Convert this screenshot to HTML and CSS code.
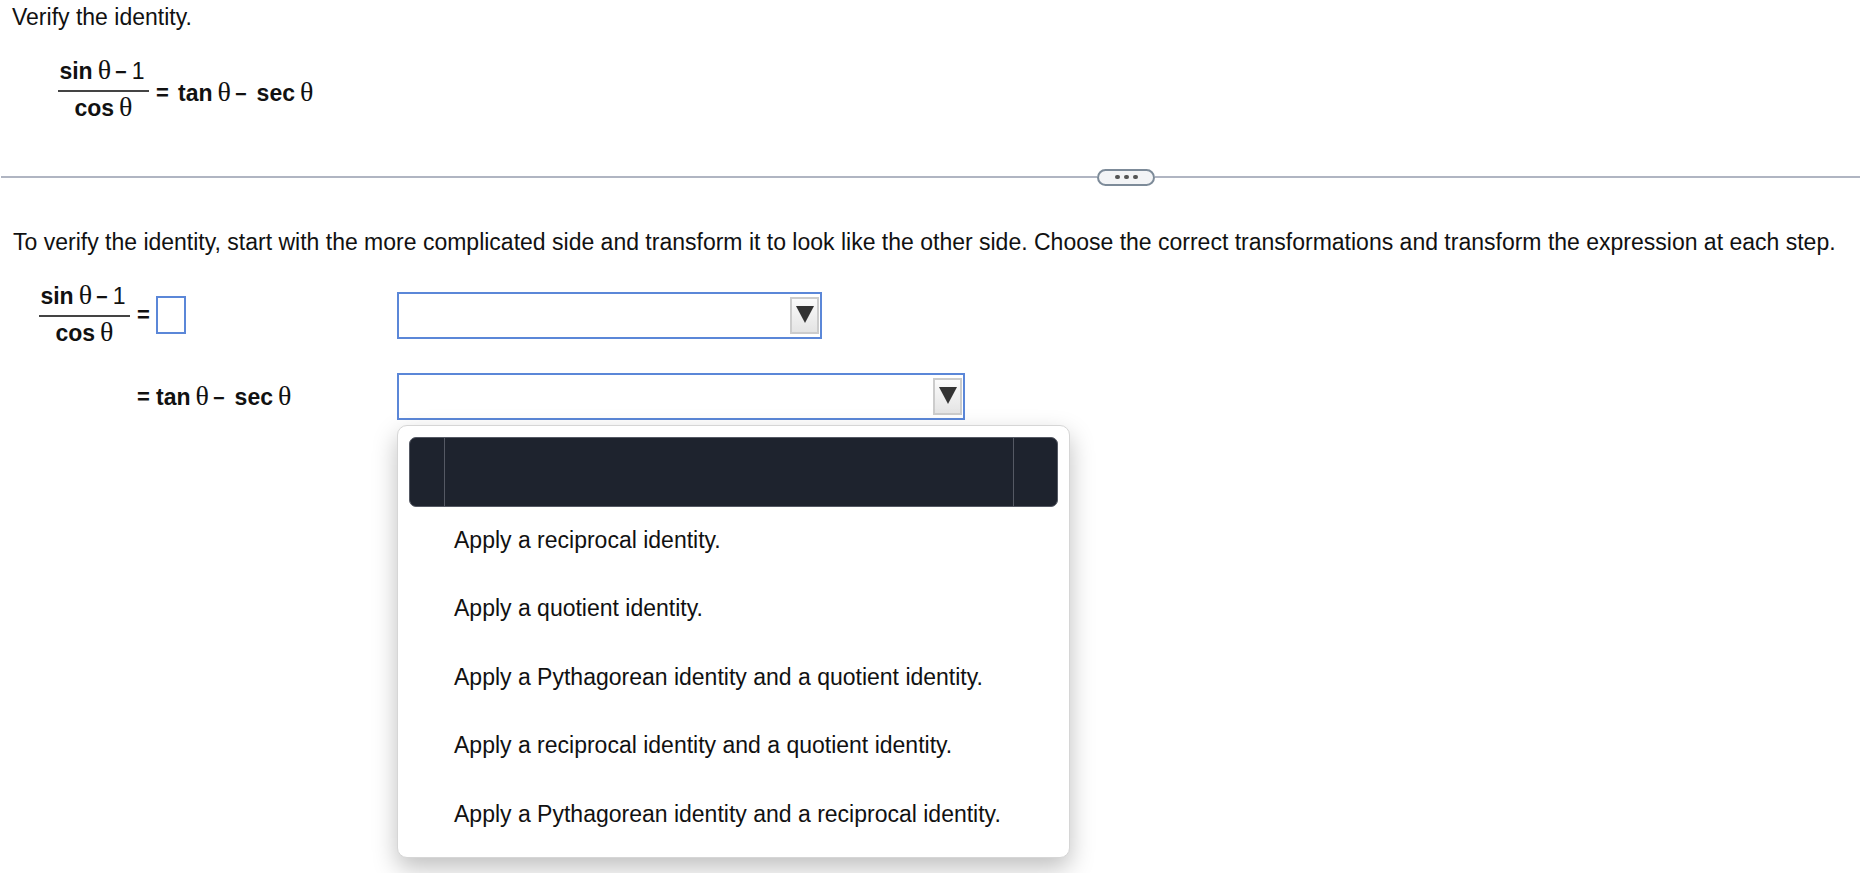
FILE: index.html
```
<!DOCTYPE html>
<html lang="en">
<head>
    <meta charset="UTF-8">
    <meta name="viewport" content="width=device-width, initial-scale=1.0">
    <title>Verify the identity</title>
    <link rel="stylesheet" href="styles.css">
</head>
<body>
    <section class="question">
        <p>Verify the identity.</p>
        <div class="equation">
            <div class="fraction">
                <div class="numerator"><b>sin</b><span class="theta">θ</span><b class="minus">−</b>1</div>
                <div class="denominator"><b>cos</b><span class="theta">θ</span></div>
            </div>
            <b class="equals">=</b>
            <div class="expression"><b>tan</b><span class="theta">θ</span><b class="minus wide">−</b><b>sec</b><span class="theta">θ</span></div>
        </div>
    </section>

    <div class="divider">
        <button class="handle" type="button" aria-label="Resize question area">
            <span class="dot"></span><span class="dot"></span><span class="dot"></span>
        </button>
    </div>

    <section class="answer">
        <p>To verify the identity, start with the more complicated side and transform it to look like the other side. Choose the correct transformations and transform the expression at each step.</p>
        <div class="steps">
            <div class="fraction">
                <div class="numerator"><b>sin</b><span class="theta">θ</span><b class="minus">−</b>1</div>
                <div class="denominator"><b>cos</b><span class="theta">θ</span></div>
            </div>
            <b class="equals">=</b>
            <div class="expression"><input class="blank" type="text" aria-label="Transformed expression"></div>
            <div class="dropdown">
                <select class="first" aria-label="First transformation">
                    <option></option>
                </select>
                <span class="arrow"></span>
            </div>

            <b class="equals second-row">=</b>
            <div class="expression"><b>tan</b><span class="theta">θ</span><b class="minus wide">−</b><b>sec</b><span class="theta">θ</span></div>
            <div class="dropdown">
                <select class="second" aria-label="Second transformation">
                    <option></option>
                </select>
                <span class="arrow"></span>
                <ul class="menu" role="listbox" aria-label="Transformations">
                    <li class="selected" role="option" aria-selected="true"></li>
                    <li role="option">Apply a reciprocal identity.</li>
                    <li role="option">Apply a quotient identity.</li>
                    <li role="option">Apply a Pythagorean identity and a quotient identity.</li>
                    <li role="option">Apply a reciprocal identity and a quotient identity.</li>
                    <li role="option">Apply a Pythagorean identity and a reciprocal identity.</li>
                </ul>
            </div>
        </div>
    </section>
</body>
</html>
```

FILE: styles.css
```
* {
    box-sizing: border-box;
}
body {
    min-height: 100vh;
    margin: 0;
    background: #fff;
    color: #111;
    font-family: "Liberation Sans", Arial, sans-serif;
    font-size: 23px;
    line-height: 28px;
    overflow: hidden;
}
p {
    margin: 0;
}
.question {
    padding: 3px 12px 0;
}
.equation {
    display: flex;
    align-items: center;
    margin: 26px 0 44px 46px;
}
.fraction {
    width: 91px;
    text-align: center;
    white-space: nowrap;
}
.numerator {
    height: 35px;
    padding-right: 3px;
    border-bottom: 2px solid #444;
}
.denominator {
    height: 31px;
    padding-top: 2px;
}
.theta {
    margin-left: 5px;
    font-family: "Liberation Serif", serif;
    font-size: 28px;
    line-height: 20px;
}
.minus {
    margin: 0 5px 0 4px;
    font-size: 20px;
    line-height: 20px;
}
.minus.wide {
    margin-right: 10px;
}
.equals {
    width: 13px;
    margin-left: 8px;
    font-size: 22px;
}
.expression {
    margin-left: 9px;
    white-space: nowrap;
}
.equation .equals,
.equation .expression {
    padding-top: 5px;
}
.equation .equals {
    margin-left: 7px;
}

.divider {
    display: flex;
    align-items: center;
    height: 20px;
}
.divider::before,
.divider::after {
    content: "";
    height: 2px;
    background: #b0b5c2;
}
.divider::before {
    flex: 1096;
    margin-left: 1px;
}
.divider::after {
    flex: 705;
}
.handle {
    display: flex;
    align-items: center;
    justify-content: center;
    gap: 4px;
    width: 58px;
    height: 17px;
    padding: 0;
    border: 2px solid #7d8b99;
    border-radius: 9px;
    background: #f3f4f6;
}
.dot {
    width: 5px;
    height: 4px;
    border-radius: 2px;
    background: #555;
}

.answer {
    padding: 41px 0 0 13px;
}
.answer p {
    white-space: nowrap;
}
.steps {
    display: grid;
    grid-template-columns: 91px 21px 247px 1fr;
    row-gap: 25px;
    align-items: center;
    margin: 26px 0 0 26px;
}
.steps .equals {
    margin-left: 7px;
}
.steps .expression {
    margin-left: 5px;
}
.second-row {
    grid-column: 2;
}
.blank {
    display: block;
    width: 30px;
    height: 38px;
    padding: 0 4px;
    border: 2px solid #5b87d8;
    font: inherit;
}
.dropdown {
    position: relative;
    justify-self: start;
    margin-left: -1px;
}
select {
    display: block;
    height: 47px;
    border: 2px solid #5b87d8;
    border-radius: 0;
    background: #fff;
    appearance: none;
    font: inherit;
}
.first {
    width: 425px;
}
.second {
    width: 568px;
}
.arrow {
    position: absolute;
    top: 5px;
    right: 3px;
    width: 29px;
    height: 37px;
    border: 2px solid #ccc;
    background: linear-gradient(#fbfbfb, #e4e4e4);
    pointer-events: none;
}
.arrow::before {
    content: "";
    position: absolute;
    top: 7px;
    left: 4px;
    border: solid transparent;
    border-width: 17px 9px 0;
    border-top-color: #333;
}

.menu {
    position: absolute;
    top: 52px;
    left: 0;
    display: grid;
    grid-auto-rows: 1fr;
    width: 673px;
    min-height: 433px;
    margin: 0;
    padding: 11px 11px 9px;
    border: 1px solid #d6d6d6;
    border-radius: 10px;
    background: #fff;
    box-shadow: 0 10px 24px rgba(0, 0, 0, 0.25);
    list-style: none;
}
.menu li {
    display: flex;
    align-items: center;
    padding: 0 45px;
    white-space: nowrap;
}
.menu .selected {
    margin-bottom: -1px;
    padding: 0 43px 0 34px;
    border: 1px solid #555964;
    border-radius: 7px;
    background: #1e232e;
}
.selected::before {
    content: "";
    flex: 1;
    align-self: stretch;
    border: solid #555964;
    border-width: 0 1px;
}
```
